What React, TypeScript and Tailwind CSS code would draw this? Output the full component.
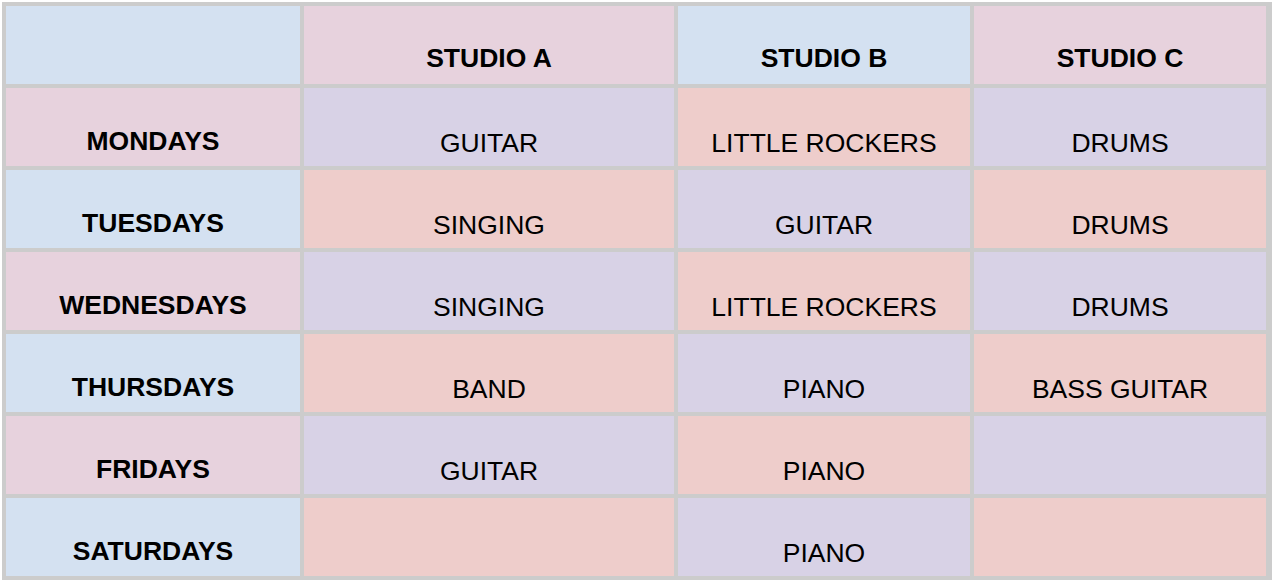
import React from "react";

const B = "bg-[#d4e1f1]";
const P = "bg-[#e7d2dd]";
const V = "bg-[#d8d2e6]";
const R = "bg-[#eecdcb]";

type Cell = { t: string; c: string; bold?: boolean; pb: string };

const header: Cell[] = [
  { t: "", c: B, pb: "pb-[11px]" },
  { t: "STUDIO A", c: P, bold: true, pb: "pb-[11px]" },
  { t: "STUDIO B", c: B, bold: true, pb: "pb-[11px]" },
  { t: "STUDIO C", c: P, bold: true, pb: "pb-[11px]" },
];

const rows: [string, string, string, string][] = [
  ["MONDAYS", "GUITAR", "LITTLE ROCKERS", "DRUMS"],
  ["TUESDAYS", "SINGING", "GUITAR", "DRUMS"],
  ["WEDNESDAYS", "SINGING", "LITTLE ROCKERS", "DRUMS"],
  ["THURSDAYS", "BAND", "PIANO", "BASS GUITAR"],
  ["FRIDAYS", "GUITAR", "PIANO", ""],
  ["SATURDAYS", "", "PIANO", ""],
];

export default function App() {
  const cells: Cell[] = [...header];
  rows.forEach((r, i) => {
    const even = i % 2 === 0;
    cells.push({ t: r[0], c: even ? P : B, bold: true, pb: "pb-[10px]" });
    cells.push({ t: r[1], c: even ? V : R, pb: "pb-[8px]" });
    cells.push({ t: r[2], c: even ? R : V, pb: "pb-[8px]" });
    cells.push({ t: r[3], c: even ? V : R, pb: "pb-[8px]" });
  });
  return (
    <div className="bg-white w-[1272px] h-[584px] pt-[2px] pl-[2px] font-['Liberation_Sans',Arial,sans-serif] text-black">
      <div className="w-[1270px] bg-[#cccccc] p-[4px] pr-[6px] grid grid-cols-[294px_370px_292px_292px] auto-rows-[78px] gap-[4px]">
        {cells.map((cell, i) => (
          <div
            key={i}
            className={`${cell.c} ${cell.pb} flex items-end justify-center text-[26.5px] leading-[30px] ${cell.bold ? "font-bold" : "font-normal"}`}
          >
            {cell.t}
          </div>
        ))}
      </div>
    </div>
  );
}
